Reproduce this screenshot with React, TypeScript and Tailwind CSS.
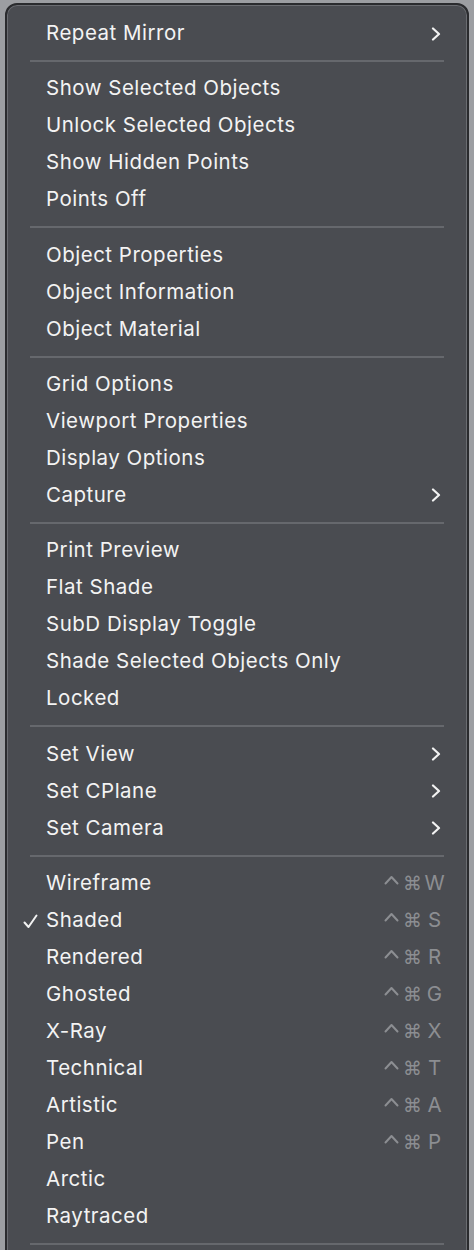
import React from "react";

type Item = { label: string; sub?: boolean; check?: boolean; key?: string };

const sections: Item[][] = [
  [{ label: "Repeat Mirror", sub: true }],
  [
    { label: "Show Selected Objects" },
    { label: "Unlock Selected Objects" },
    { label: "Show Hidden Points" },
    { label: "Points Off" },
  ],
  [
    { label: "Object Properties" },
    { label: "Object Information" },
    { label: "Object Material" },
  ],
  [
    { label: "Grid Options" },
    { label: "Viewport Properties" },
    { label: "Display Options" },
    { label: "Capture", sub: true },
  ],
  [
    { label: "Print Preview" },
    { label: "Flat Shade" },
    { label: "SubD Display Toggle" },
    { label: "Shade Selected Objects Only" },
    { label: "Locked" },
  ],
  [
    { label: "Set View", sub: true },
    { label: "Set CPlane", sub: true },
    { label: "Set Camera", sub: true },
  ],
  [
    { label: "Wireframe", key: "W" },
    { label: "Shaded", key: "S", check: true },
    { label: "Rendered", key: "R" },
    { label: "Ghosted", key: "G" },
    { label: "X-Ray", key: "X" },
    { label: "Technical", key: "T" },
    { label: "Artistic", key: "A" },
    { label: "Pen", key: "P" },
    { label: "Arctic" },
    { label: "Raytraced" },
  ],
];

function Chevron() {
  return (
    <svg width="12" height="14" viewBox="0 0 12 14" className="text-[#f2f2f2]">
      <path d="M3 1.5 L9 7 L3 12.5" fill="none" stroke="currentColor" strokeWidth="2.2" strokeLinecap="round" strokeLinejoin="round" />
    </svg>
  );
}

function Check() {
  return (
    <svg width="15" height="15" viewBox="0 0 15 15" className="text-[#f2f2f2]">
      <path d="M1.5 8.5 L5.5 13 L13.5 1.5" fill="none" stroke="currentColor" strokeWidth="2" strokeLinecap="round" strokeLinejoin="round" />
    </svg>
  );
}

function Caret() {
  return (
    <svg width="15" height="10" viewBox="0 0 15 10">
      <path d="M1.5 8.5 L7.5 2 L13.5 8.5" fill="none" stroke="#8c8e92" strokeWidth="2" strokeLinecap="round" strokeLinejoin="round" />
    </svg>
  );
}

function Row({ item }: { item: Item }) {
  return (
    <div className="relative flex h-[37px] items-center pl-[38px] pr-[22px]">
      {item.check && (
        <div className="absolute left-[15px] top-[12px]">
          <Check />
        </div>
      )}
      <span className="flex-1 text-[20.5px] text-[#f3f3f3] tracking-[0.5px]">{item.label}</span>
      {item.sub && (
        <div className="mr-[2px] flex items-center">
          <Chevron />
        </div>
      )}
      {item.key && (
        <span className="mr-[-3px] flex items-center text-[#8c8e92]">
          <span className="mb-[6px] flex items-center">
            <Caret />
          </span>
          <span className="ml-[4px] font-['DejaVu_Sans',sans-serif] text-[19px] leading-none">⌘</span>
          <span className="w-[25px] text-center text-[20.5px]">{item.key}</span>
        </span>
      )}
    </div>
  );
}

function Sep() {
  return (
    <div className="flex h-[18.3px] items-center px-[22px]">
      <div className="h-[2px] w-full bg-[#66686d]" />
    </div>
  );
}

export default function App() {
  return (
    <div className="h-[1250px] w-[474px] overflow-hidden bg-[#9c9ea2] pt-[3px] font-['Inter','Liberation_Sans',sans-serif]">
      <div className="ml-[5px] w-[464px] rounded-[12px] border-2 border-[#2a2b2e] bg-[#4a4c51] shadow-[inset_0_0_0_1px_#6a6c71]">
        <div className="px-[1px] pb-[40px] pt-[10px]">
          {sections.map((sec, i) => (
            <div key={i}>
              {i > 0 && <Sep />}
              {sec.map((it) => (
                <Row key={it.label} item={it} />
              ))}
            </div>
          ))}
          <Sep />
        </div>
      </div>
    </div>
  );
}
